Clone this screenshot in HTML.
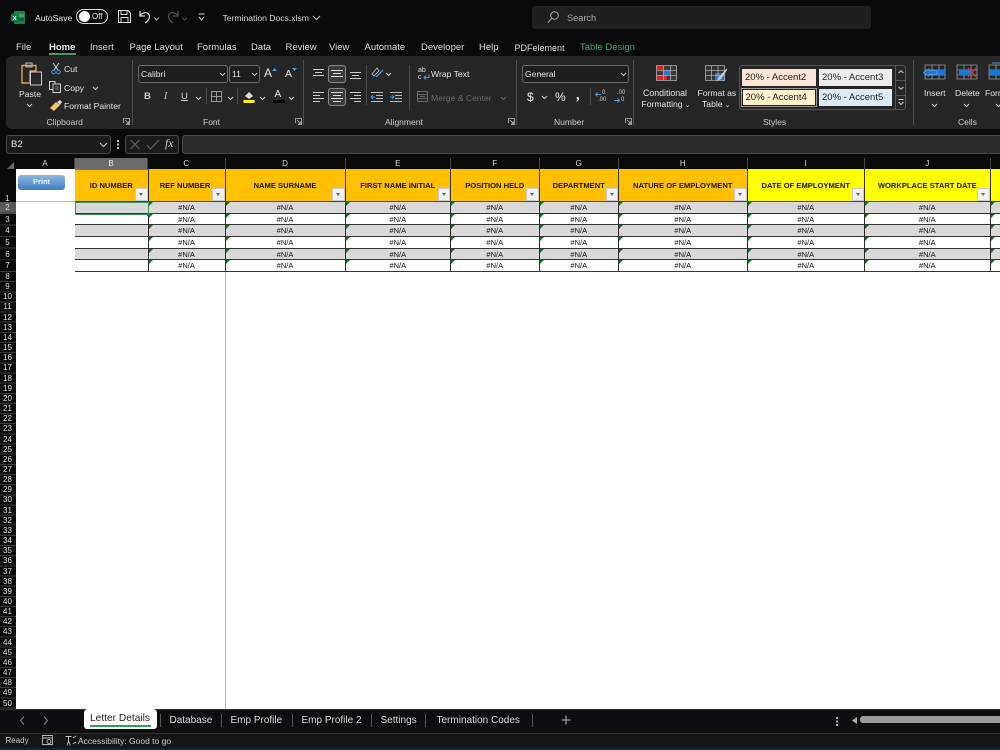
<!DOCTYPE html>
<html><head><meta charset="utf-8"><style>
html,body{margin:0;padding:0;width:1000px;height:750px;overflow:hidden;background:#0a0a0c;font-family:"Liberation Sans",sans-serif}
#w{position:relative;width:1000px;height:750px;overflow:hidden;filter:blur(.35px)}
.a{position:absolute}
.t{position:absolute;white-space:nowrap;color:#e4e4e4;font-size:8.6px;line-height:12px}
.m{font-size:9.5px;color:#ddd;top:41.5px}
.s{position:absolute;width:1px;background:#4a4a4a}
.hc{position:absolute;top:158px;height:11px;font-size:8px;line-height:11px;color:#ddd;text-align:center;background:#0a0a0a;border-right:1px solid #444;box-sizing:border-box}
svg{position:absolute;overflow:visible}
.r{position:absolute;left:75px;height:11.65px;display:grid;grid-template-columns:73.5px 77px 120px 105.5px 88.5px 79.5px 128.5px 117.5px 125.5px 20px;background:#fff;color:#111;font-size:7.5px;line-height:11.5px;text-align:center}
.r.d{background:#d9d9d9}
.r div{position:relative;box-sizing:border-box;border-right:1px solid #2a2a2a;border-bottom:1px solid #333;height:11.65px}
.r div:not(:first-child)::before{content:"";position:absolute;left:0;top:0;border-top:4px solid #0d7a1c;border-right:4px solid transparent}
.h{position:absolute;top:169px;height:32.5px;box-sizing:border-box;background:#ffc000;border-right:1px solid #333;border-bottom:1px solid #444;color:#1a1400;font-weight:bold;font-size:7.6px;line-height:34px;text-align:center;white-space:nowrap}
.h.y{background:#ff0}
.h i{position:absolute;right:0;bottom:0;width:12.5px;height:12.5px;background:#f2f2f2;border:1px solid #ccc;box-sizing:border-box}
.h i::after{content:"";position:absolute;left:3px;top:4px;border-top:3px solid #666;border-left:2.5px solid transparent;border-right:2.5px solid transparent}
.st{position:absolute;height:15px;box-sizing:border-box;color:#222;font-size:9.5px;line-height:15px;padding-left:3px}
.tab{position:absolute;top:714px;color:#ddd;font-size:10px;line-height:13px;white-space:nowrap}
.sep{position:absolute;top:714px;width:1px;height:13px;background:#555}
</style></head><body><div id="w">

<!-- title bar -->
<svg style="left:11px;top:11px" width="14" height="13"><rect x="3" y="0" width="11" height="13" rx="1" fill="#1f7d48"/><rect x="0" y="2.5" width="8" height="8" rx="1" fill="#107c41"/><rect x="8" y="3" width="5" height="3" fill="#33a866"/><rect x="8" y="7" width="5" height="3" fill="#155f38"/><text x="1.7" y="9" font-size="7" font-weight="bold" fill="#fff" font-family="Liberation Sans">x</text></svg>
<div class="t" style="left:35px;top:11.5px;font-size:8.6px">AutoSave</div>
<div class="a" style="left:76px;top:9px;width:32px;height:15px;box-sizing:border-box;border:1px solid #ddd;border-radius:8px"></div>
<div class="a" style="left:79px;top:11px;width:11px;height:11px;border-radius:50%;background:#fff"></div>
<div class="t" style="left:92px;top:11px;font-size:8px">Off</div>
<svg style="left:118px;top:10px" width="13" height="13" fill="none" stroke="#ddd" stroke-width="1"><path d="M.5.5H10L12.5 3V12.5H.5Z M3 .5V4.5H9V.5 M3 12.5V7.5H10V12.5"/></svg>
<svg style="left:139px;top:10px" width="21" height="14" fill="none" stroke="#ddd" stroke-width="1.2"><path d="M1 1V6H6 M1 6C3 2 10 1 10.5 6.5C10.5 9 9 11 6 13"/><path d="M15 7.5L17.5 10L20 7.5" stroke-width=".8"/></svg>
<svg style="left:167px;top:10px" width="21" height="14" fill="none" stroke="#555" stroke-width="1.2"><path d="M11 1V6H6 M11 6C9 2 2 1 1.5 6.5C1.5 9 3 11 6 13"/><path d="M15 7.5L17.5 10L20 7.5" stroke-width=".8"/></svg>
<svg style="left:197px;top:13px" width="9" height="8" fill="none" stroke="#ccc"><path d="M1.5 1H7.5 M2 4L4.5 7L7 4"/></svg>
<div class="t" style="left:222.5px;top:12px;font-size:8.6px;color:#d8d8d8">Termination Docs.xlsm</div>
<svg style="left:312px;top:15px" width="9" height="6" fill="none" stroke="#ccc"><path d="M1 1L4.500 4.500L8 1"/></svg>
<div class="a" style="left:532px;top:6px;width:339px;height:23px;background:#1f1f1f;border-radius:3px"></div>
<svg style="left:547px;top:11px" width="12" height="13" fill="none" stroke="#aaa" stroke-width="1"><circle cx="7.5" cy="4.5" r="3.8"/><path d="M4.800 7.300L.8 11.800"/></svg>
<div class="t" style="left:567px;top:12px;font-size:9.2px;color:#aaa">Search</div>

<!-- menu -->
<div class="t m" style="left:16px">File</div>
<div class="t m" style="left:49px;font-weight:bold;color:#eee">Home</div>
<div class="a" style="left:49px;top:53px;width:27px;height:2px;background:#3aa06a"></div>
<div class="t m" style="left:90px">Insert</div>
<div class="t m" style="left:129.5px">Page Layout</div>
<div class="t m" style="left:197px">Formulas</div>
<div class="t m" style="left:251px">Data</div>
<div class="t m" style="left:285.5px">Review</div>
<div class="t m" style="left:329px">View</div>
<div class="t m" style="left:364.5px">Automate</div>
<div class="t m" style="left:421px">Developer</div>
<div class="t m" style="left:479px">Help</div>
<div class="t m" style="left:514.5px;font-size:9px">PDFelement</div>
<div class="t m" style="left:580px;color:#3ea86e">Table Design</div>

<!-- ribbon -->
<div class="a" style="left:6px;top:56px;width:1000px;height:73px;background:#262626;border-radius:6px 0 0 6px"></div>
<div class="s" style="left:132px;top:60px;height:65px"></div>
<div class="s" style="left:303px;top:60px;height:65px"></div>
<div class="s" style="left:516px;top:60px;height:65px"></div>
<div class="s" style="left:633px;top:60px;height:65px"></div>
<div class="s" style="left:913px;top:60px;height:65px"></div>

<!-- clipboard -->
<svg style="left:21px;top:62px" width="22" height="24" fill="none"><path d="M1 3.500H15V9H9V21H1Z" stroke="#e0a040" stroke-width="1.400"/><rect x="5" y="1" width="6" height="4" stroke="#bbb"/><rect x="9.500" y="10" width="11" height="13" stroke="#ccc"/></svg>
<div class="t" style="left:19px;top:88px">Paste</div>
<svg style="left:26px;top:103px" width="7" height="5" fill="none" stroke="#ccc"><path d="M1 1L3.500 3.500L6 1"/></svg>
<svg style="left:51px;top:62px" width="10" height="13" fill="none"><path d="M2 1L7 8 M8 1L3 8" stroke="#ccc"/><circle cx="2.500" cy="10" r="1.800" stroke="#4a8fd8"/><circle cx="7.500" cy="10" r="1.800" stroke="#4a8fd8"/></svg>
<div class="t" style="left:64px;top:63px">Cut</div>
<svg style="left:49px;top:81px" width="12" height="12" fill="none" stroke="#ccc"><path d="M.5.5H6V8.500H.5Z"/><path d="M4 3H11.500V11.500H4Z" fill="#262626"/><path d="M6 6H10 M6 8H10" stroke-width=".6"/></svg>
<div class="t" style="left:64px;top:82px">Copy</div>
<svg style="left:92px;top:86px" width="7" height="5" fill="none" stroke="#ccc"><path d="M1 1L3.500 3.500L6 1"/></svg>
<svg style="left:49px;top:100px" width="13" height="12"><path d="M1 8L7 2L11 5L5 11Z" fill="#f0c870"/><path d="M8 2L11 0L13 2L11 5Z" fill="#ddd"/></svg>
<div class="t" style="left:64px;top:100px">Format Painter</div>
<div class="t" style="left:46.5px;top:116px;font-size:8.5px;color:#ccc">Clipboard</div>
<svg style="left:123px;top:118px" width="7" height="7" fill="none" stroke="#bbb" stroke-width=".8"><path d="M.5 5V.5H6.500V6.500H3 M2 2L5.500 5.500 M5.500 3.500V5.500H3.500"/></svg>

<!-- font -->
<div class="a" style="left:138px;top:65px;width:90px;height:18px;box-sizing:border-box;border:1px solid #6a6a6a;border-radius:3px;background:#1e1e1e"></div>
<div class="t" style="left:141px;top:68px">Calibri</div>
<svg style="left:219px;top:72px" width="7" height="5" fill="none" stroke="#ccc"><path d="M1 1L3.500 3.500L6 1"/></svg>
<div class="a" style="left:229px;top:65px;width:31px;height:18px;box-sizing:border-box;border:1px solid #6a6a6a;border-radius:3px;background:#1e1e1e"></div>
<div class="t" style="left:232px;top:68px">11</div>
<svg style="left:251px;top:72px" width="7" height="5" fill="none" stroke="#ccc"><path d="M1 1L3.500 3.500L6 1"/></svg>
<div class="t" style="left:264px;top:66px;font-size:12px;line-height:15px">A</div>
<svg style="left:272px;top:68px" width="5" height="3"><path d="M0 3L2.500 0L5 3Z" fill="#4a9ad8"/></svg>
<div class="t" style="left:285px;top:67px;font-size:10.5px;line-height:14px">A</div>
<svg style="left:292px;top:68px" width="5" height="3"><path d="M0 0L2.500 3L5 0Z" fill="#4a9ad8"/></svg>
<div class="t" style="left:144px;top:91px;font-weight:bold;font-size:9.5px;color:#ccc">B</div>
<div class="t" style="left:164px;top:91px;font-style:italic;font-family:'Liberation Serif',serif;font-size:10px;color:#ccc">I</div>
<div class="t" style="left:181px;top:91px;font-size:9.5px;text-decoration:underline;color:#ccc">U</div>
<svg style="left:195px;top:96px" width="7" height="5" fill="none" stroke="#ccc"><path d="M1 1L3.500 3.500L6 1"/></svg>
<div class="s" style="left:206px;top:88px;height:16px"></div>
<svg style="left:211px;top:91px" width="11" height="11" fill="none" stroke="#999"><path d="M.5.5H10.500V10.500H.5Z M5.500.5V10.500 M.5 5.500H10.500"/></svg>
<svg style="left:227px;top:96px" width="7" height="5" fill="none" stroke="#ccc"><path d="M1 1L3.500 3.500L6 1"/></svg>
<div class="s" style="left:237px;top:88px;height:16px"></div>
<svg style="left:243px;top:90px" width="12" height="13"><path d="M2 6L6 2L10 6L6 9Z" fill="#ddd"/><rect x="0.500" y="10" width="11" height="3" fill="#ff0"/></svg>
<svg style="left:259px;top:96px" width="7" height="5" fill="none" stroke="#ccc"><path d="M1 1L3.500 3.500L6 1"/></svg>
<div class="t" style="left:274.500px;top:89px;font-size:10px;line-height:12px">A</div>
<div class="a" style="left:272.500px;top:100px;width:12px;height:3px;background:#000"></div>
<svg style="left:288px;top:96px" width="7" height="5" fill="none" stroke="#ccc"><path d="M1 1L3.500 3.500L6 1"/></svg>
<div class="t" style="left:203px;top:116px;font-size:8.5px;color:#ccc">Font</div>
<svg style="left:295px;top:118px" width="7" height="7" fill="none" stroke="#bbb" stroke-width=".8"><path d="M.5 5V.5H6.500V6.500H3 M2 2L5.500 5.500 M5.500 3.500V5.500H3.500"/></svg>

<!-- alignment -->
<svg style="left:313px;top:69px" width="11" height="8" fill="none" stroke="#ccc"><path d="M0 .5H11 M2 3.500H9 M0 6.500H11"/></svg>
<div class="a" style="left:328px;top:65px;width:18px;height:18px;box-sizing:border-box;border:1px solid #888;border-radius:3px;background:#3a3a3a"></div>
<svg style="left:331px;top:70px" width="12" height="8" fill="none" stroke="#ddd"><path d="M0 .5H12 M2 3.500H10 M0 6.500H12"/></svg>
<svg style="left:350px;top:72px" width="11" height="8" fill="none" stroke="#ccc"><path d="M0 .5H11 M2 3.500H9 M0 6.500H11"/></svg>
<div class="s" style="left:366px;top:65px;height:40px"></div>
<svg style="left:371px;top:67px" width="13" height="12" fill="none"><path d="M1 7L6 1L8 4L3 9Z" stroke="#bbb" stroke-width=".9"/><path d="M5 10L12 3" stroke="#3a9ad8" stroke-width="1.300"/></svg>
<svg style="left:385px;top:72px" width="7" height="5" fill="none" stroke="#ccc"><path d="M1 1L3.500 3.500L6 1"/></svg>
<svg style="left:313px;top:92px" width="11" height="10" fill="none" stroke="#ccc"><path d="M0 .5H11 M0 3.500H7 M0 6.500H11 M0 9.500H7"/></svg>
<div class="a" style="left:328px;top:88px;width:18px;height:18px;box-sizing:border-box;border:1px solid #888;border-radius:3px;background:#3a3a3a"></div>
<svg style="left:331px;top:92px" width="12" height="10" fill="none" stroke="#ddd"><path d="M0 .5H12 M2 3.500H10 M0 6.500H12 M2 9.500H10"/></svg>
<svg style="left:350px;top:92px" width="11" height="10" fill="none" stroke="#ccc"><path d="M0 .5H11 M4 3.500H11 M0 6.500H11 M4 9.500H11"/></svg>
<svg style="left:371px;top:92px" width="12" height="10" fill="none"><path d="M0 .5H12 M5 3.500H12 M5 6.500H12 M0 9.500H12" stroke="#bbb"/><path d="M4 5H0 M2 3L0 5L2 7" stroke="#3a9ad8"/></svg>
<svg style="left:390px;top:92px" width="12" height="10" fill="none"><path d="M0 .5H12 M5 3.500H12 M5 6.500H12 M0 9.500H12" stroke="#bbb"/><path d="M0 5H4 M2 3L4 5L2 7" stroke="#3a9ad8"/></svg>
<div class="s" style="left:409px;top:65px;height:45px"></div>
<div class="t" style="left:418px;top:67px;font-size:7px;line-height:7px;color:#ddd">ab<br>c</div>
<svg style="left:423px;top:74px" width="7" height="6" fill="none" stroke="#4a9ad8"><path d="M6 .5V3.500H1 M3 1.500L1 3.500L3 5.500"/></svg>
<div class="t" style="left:431px;top:68px">Wrap Text</div>
<svg style="left:417px;top:91px" width="11" height="11" fill="none" stroke="#666"><path d="M.5.5H10.500V10.500H.5Z M.5 3.500H10.500 M.5 7.500H10.500 M3 5.500H8"/></svg>
<div class="t" style="left:431px;top:92px;color:#6a6a6a">Merge &amp; Center</div>
<svg style="left:500px;top:96px" width="7" height="5" fill="none" stroke="#666"><path d="M1 1L3.500 3.500L6 1"/></svg>
<div class="t" style="left:385px;top:116px;font-size:8.5px;color:#ccc">Alignment</div>
<svg style="left:508px;top:118px" width="7" height="7" fill="none" stroke="#bbb" stroke-width=".8"><path d="M.5 5V.5H6.500V6.500H3 M2 2L5.500 5.500 M5.500 3.500V5.500H3.500"/></svg>

<!-- number -->
<div class="a" style="left:522px;top:65px;width:107px;height:18px;box-sizing:border-box;border:1px solid #6a6a6a;border-radius:3px;background:#1e1e1e"></div>
<div class="t" style="left:525px;top:68px">General</div>
<svg style="left:620px;top:72px" width="7" height="5" fill="none" stroke="#ccc"><path d="M1 1L3.500 3.500L6 1"/></svg>
<div class="t" style="left:527px;top:90px;font-size:12px;line-height:14px">$</div>
<svg style="left:541px;top:95px" width="7" height="5" fill="none" stroke="#ccc"><path d="M1 1L3.500 3.500L6 1"/></svg>
<div class="t" style="left:555px;top:90px;font-size:12px;line-height:14px">%</div>
<div class="t" style="left:576px;top:87px;font-size:15px;line-height:16px;font-weight:bold;font-family:'Liberation Serif',serif">,</div>
<div class="s" style="left:590px;top:88px;height:17px"></div>
<svg style="left:595px;top:92px" width="6" height="5" fill="none" stroke="#4a9ad8"><path d="M6 2.500H.5 M2.500 .5L.5 2.500L2.500 4.500"/></svg>
<div class="t" style="left:602px;top:90px;font-size:6px;line-height:6.5px;color:#ccc">0</div>
<div class="t" style="left:598px;top:97px;font-size:6px;line-height:6.5px;color:#ccc">.00</div>
<div class="t" style="left:617px;top:90px;font-size:6px;line-height:6.5px;color:#ccc">.00</div>
<svg style="left:614px;top:98px" width="6" height="5" fill="none" stroke="#4a9ad8"><path d="M0 2.500H5.500 M3.500 .5L5.500 2.500L3.500 4.500"/></svg>
<div class="t" style="left:621px;top:97px;font-size:6px;line-height:6.5px;color:#ccc">0</div>
<div class="t" style="left:554px;top:116px;font-size:8.5px;color:#ccc">Number</div>
<svg style="left:625px;top:118px" width="7" height="7" fill="none" stroke="#bbb" stroke-width=".8"><path d="M.5 5V.5H6.500V6.500H3 M2 2L5.500 5.500 M5.500 3.500V5.500H3.500"/></svg>

<!-- cond format -->
<svg style="left:656px;top:65px" width="21" height="16"><rect width="21" height="16" fill="#3a3a3a"/><rect x="0" y="0" width="7" height="5" fill="#e02020"/><rect x="7" y="5" width="7" height="5" fill="#1a78d8"/><rect x="0" y="10" width="11" height="5" fill="#e02020"/><path d="M.5.5H20.500V15.500H.5Z M.5 5.500H20.500 M.5 10.500H20.500 M7.500.5V15.500 M14.500.5V15.500" fill="none" stroke="#aaa" stroke-width=".8"/></svg>
<div class="t" style="left:643px;top:87px;font-size:8.8px">Conditional</div>
<div class="t" style="left:641.500px;top:98px">Formatting<span style="font-size:7px"> ⌄</span></div>
<svg style="left:705px;top:65px" width="23" height="19"><rect x="0" y="0" width="20" height="16" fill="#333"/><rect x="10" y="8" width="10" height="8" fill="#1a78d8"/><path d="M.5.5H19.500V15.500H.5Z M.5 5.500H19.500 M.5 10.500H19.500 M6.500.5V15.500 M13 .5V15.500" fill="none" stroke="#aaa" stroke-width=".8"/><path d="M22 3L14 12L12 16L16 14L22 5" fill="#ccc"/></svg>
<div class="t" style="left:697.500px;top:87px">Format as</div>
<div class="t" style="left:702px;top:98px">Table<span style="font-size:7px"> ⌄</span></div>

<!-- styles -->
<div class="a" style="left:739px;top:65px;width:167px;height:45px;box-sizing:border-box;border:1px solid #555;border-radius:3px"></div>
<div class="st" style="left:742px;top:69px;width:74px;height:17px;background:#fce4d6;line-height:17px">20% - Accent2</div>
<div class="st" style="left:819px;top:69px;width:73px;height:17px;background:#ededed;line-height:17px">20% - Accent3</div>
<div class="st" style="left:741px;top:88px;width:76px;height:19px;background:#fff2cc;border:1px solid #999;outline:1px solid #222;outline-offset:-2px;line-height:18px;padding-left:3.5px">20% - Accent4</div>
<div class="st" style="left:819px;top:89px;width:73px;height:17px;background:#ddebf7;line-height:17px">20% - Accent5</div>
<div class="a" style="left:895px;top:65px;width:1px;height:45px;background:#555"></div>
<div class="a" style="left:895px;top:80px;width:11px;height:1px;background:#555"></div>
<div class="a" style="left:895px;top:95px;width:11px;height:1px;background:#555"></div>
<svg style="left:898px;top:70px" width="6" height="4" fill="none" stroke="#ccc"><path d="M.5 3L3 .8L5.500 3"/></svg>
<svg style="left:898px;top:86px" width="6" height="4" fill="none" stroke="#ccc"><path d="M.5 1L3 3.200L5.500 1"/></svg>
<svg style="left:898px;top:99px" width="6" height="7" fill="none" stroke="#ccc"><path d="M.5 .5H5.500 M.5 3L3 5.500L5.500 3"/></svg>
<div class="t" style="left:763px;top:116px;font-size:8.5px;color:#ccc">Styles</div>

<!-- cells -->
<svg style="left:923px;top:64px" width="24" height="17"><path d="M2 1H22V15H2Z M2 6H22 M2 11H22 M9 1V15 M16 1V15" fill="none" stroke="#999" stroke-width=".8"/><rect x="9" y="6" width="13" height="5" fill="#1a78d8"/><path d="M0 8.500L6 4.500V6.500H14V10.500H6V12.500Z" fill="#1a78d8" stroke="#7ab8f0" stroke-width=".5"/></svg>
<svg style="left:956px;top:64px" width="22" height="17"><path d="M1 1H21V15H1Z M1 6H21 M1 11H21 M8 1V15 M15 1V15" fill="none" stroke="#999" stroke-width=".8"/><rect x="3" y="6" width="12" height="5" fill="#1a78d8"/><path d="M12 4L20 13 M20 4L12 13" stroke="#d83a3a" stroke-width="1.200"/></svg>
<svg style="left:988px;top:62px" width="22" height="19"><path d="M1 3H21V17H1Z M1 8H21 M1 13H21 M8 3V17" fill="none" stroke="#999" stroke-width=".8"/><rect x="1" y="8" width="20" height="5" fill="#1a78d8"/><path d="M4 1H20" stroke="#4a9ad8"/></svg>
<div class="t" style="left:924px;top:87px">Insert</div>
<div class="t" style="left:955px;top:87px">Delete</div>
<div class="t" style="left:985px;top:87px">Format</div>
<svg style="left:931px;top:103px" width="7" height="5" fill="none" stroke="#ccc"><path d="M1 1L3.500 3.500L6 1"/></svg>
<svg style="left:963px;top:103px" width="7" height="5" fill="none" stroke="#ccc"><path d="M1 1L3.500 3.500L6 1"/></svg>
<svg style="left:995px;top:103px" width="7" height="5" fill="none" stroke="#ccc"><path d="M1 1L3.500 3.500L6 1"/></svg>
<div class="t" style="left:958px;top:116px;font-size:8.5px;color:#ccc">Cells</div>

<!-- formula bar -->
<div class="a" style="left:0;top:129px;width:1000px;height:29px;background:#0a0a0c"></div>
<div class="a" style="left:6px;top:135px;width:105px;height:19px;box-sizing:border-box;border:1px solid #4a4a4a;border-radius:3px;background:#1c1c1c"></div>
<div class="t" style="left:11px;top:139px;font-size:9.5px">B2</div>
<svg style="left:99px;top:142px" width="9" height="6" fill="none" stroke="#ccc"><path d="M1 1L4.500 4.500L8 1"/></svg>
<div class="a" style="left:117px;top:140px;width:2px;height:2px;background:#bbb;box-shadow:0 3.5px 0 #bbb,0 7px 0 #bbb"></div>
<div class="a" style="left:125px;top:135px;width:54px;height:19px;box-sizing:border-box;border:1px solid #4a4a4a;border-radius:3px;background:#1c1c1c"></div>
<svg style="left:130px;top:139px" width="30" height="11" fill="none" stroke="#606060" stroke-width="1.100"><path d="M.5 1L9.500 10 M9.500 1L.5 10 M17 6L20.500 10L29 1"/></svg>
<div class="t" style="left:165px;top:138px;font-family:'Liberation Serif',serif;font-style:italic;font-size:11.5px;color:#ccc">fx</div>
<div class="a" style="left:182px;top:135px;width:830px;height:19px;box-sizing:border-box;border:1px solid #4a4a4a;border-radius:3px;background:#2a2a2a"></div>

<!-- sheet -->
<div class="a" style="left:0;top:158px;width:1000px;height:551px;background:#fff"></div>
<div class="a" style="left:0;top:158px;width:16px;height:551px;background:#0a0a0a"></div>
<svg style="left:7px;top:162px" width="7" height="7"><path d="M7 0V7H0Z" fill="#666"/></svg>
<div class="hc" style="left:16px;width:59px">A</div>
<div class="hc" style="left:75px;width:73px;background:#6a6a6a;color:#eee">B</div>
<div class="hc" style="left:148px;width:77.5px">C</div>
<div class="hc" style="left:225.5px;width:120px">D</div>
<div class="hc" style="left:345.5px;width:105.5px">E</div>
<div class="hc" style="left:451px;width:88.5px">F</div>
<div class="hc" style="left:539.5px;width:79.5px">G</div>
<div class="hc" style="left:619px;width:128.5px">H</div>
<div class="hc" style="left:747.5px;width:117.5px">I</div>
<div class="hc" style="left:865px;width:125.5px">J</div>
<div class="hc" style="left:990.5px;width:20px"></div>

<div class="a" style="left:0;top:192.5px;width:15px;font-size:8px;line-height:11px;color:#ddd;text-align:center">1</div>
<div class="a" style="left:0;top:202px;width:16px;height:11.6px;background:#5a5a5a"></div>
<div class="a" style="left:0;top:202px;width:16px;height:70px;background:repeating-linear-gradient(to bottom,transparent 0,transparent 10.65px,#3a3a3a 10.65px,#3a3a3a 11.65px)"></div>
<div class="a" style="left:0;top:202px;width:15px;font-size:8px;line-height:11.65px;color:#ddd;text-align:center">2<br>3<br>4<br>5<br>6<br>7</div>
<div class="a" style="left:0;top:272px;width:16px;height:437px;background:repeating-linear-gradient(to bottom,transparent 0,transparent 9.15px,#3a3a3a 9.15px,#3a3a3a 10.15px)"></div>
<div class="a" style="left:0;top:272px;width:15px;font-size:8px;line-height:10.15px;color:#ddd;text-align:center">8<br>9<br>10<br>11<br>12<br>13<br>14<br>15<br>16<br>17<br>18<br>19<br>20<br>21<br>22<br>23<br>24<br>25<br>26<br>27<br>28<br>29<br>30<br>31<br>32<br>33<br>34<br>35<br>36<br>37<br>38<br>39<br>40<br>41<br>42<br>43<br>44<br>45<br>46<br>47<br>48<br>49<br>50</div>

<!-- headers row -->
<div class="a" style="left:18px;top:175px;width:47px;height:15px;border-radius:3px;background:linear-gradient(#8fb8e0,#3f7fbf);color:#e8f2fb;font-weight:bold;font-size:7.5px;line-height:14px;text-align:center">Print</div>
<div class="a" style="left:16px;top:201px;width:59px;height:1px;background:#bbb"></div>
<div class="h" style="left:75px;width:73.5px">ID NUMBER<i></i></div>
<div class="h" style="left:148.5px;width:77px;padding-right:3px">REF NUMBER<i></i></div>
<div class="h" style="left:225.5px;width:120px">NAME SURNAME<i></i></div>
<div class="h" style="left:345.5px;width:105.5px">FIRST NAME INITIAL<i></i></div>
<div class="h" style="left:451px;width:88.5px">POSITION HELD<i></i></div>
<div class="h" style="left:539.5px;width:79.5px">DEPARTMENT<i></i></div>
<div class="h" style="left:619px;width:128.5px">NATURE OF EMPLOYMENT<i></i></div>
<div class="h y" style="left:747.5px;width:117.5px">DATE OF EMPLOYMENT<i></i></div>
<div class="h y" style="left:865px;width:125.5px">WORKPLACE START DATE<i></i></div>
<div class="h y" style="left:990.5px;width:20px"></div>

<!-- data rows -->
<div class="r d" style="top:202px"><div></div><div>#N/A</div><div>#N/A</div><div>#N/A</div><div>#N/A</div><div>#N/A</div><div>#N/A</div><div>#N/A</div><div>#N/A</div><div></div></div>
<div class="r" style="top:213.65px"><div></div><div>#N/A</div><div>#N/A</div><div>#N/A</div><div>#N/A</div><div>#N/A</div><div>#N/A</div><div>#N/A</div><div>#N/A</div><div></div></div>
<div class="r d" style="top:225.3px"><div></div><div>#N/A</div><div>#N/A</div><div>#N/A</div><div>#N/A</div><div>#N/A</div><div>#N/A</div><div>#N/A</div><div>#N/A</div><div></div></div>
<div class="r" style="top:236.95px"><div></div><div>#N/A</div><div>#N/A</div><div>#N/A</div><div>#N/A</div><div>#N/A</div><div>#N/A</div><div>#N/A</div><div>#N/A</div><div></div></div>
<div class="r d" style="top:248.6px"><div></div><div>#N/A</div><div>#N/A</div><div>#N/A</div><div>#N/A</div><div>#N/A</div><div>#N/A</div><div>#N/A</div><div>#N/A</div><div></div></div>
<div class="r" style="top:260.25px"><div></div><div>#N/A</div><div>#N/A</div><div>#N/A</div><div>#N/A</div><div>#N/A</div><div>#N/A</div><div>#N/A</div><div>#N/A</div><div></div></div>
<div class="a" style="left:75px;top:201.5px;width:74px;height:13px;box-sizing:border-box;border:1.5px solid #3f8f5f"></div>
<div class="a" style="left:147px;top:212.5px;width:3px;height:3px;background:#1f7a4a"></div>
<div class="a" style="left:75px;top:169px;width:73px;height:1px;background:#3f8f5f"></div>
<div class="a" style="left:225px;top:272px;width:1px;height:437px;background:#b8b8b8"></div>

<!-- tabs -->
<div class="a" style="left:0;top:709px;width:1000px;height:24px;background:#0d0d12"></div>
<div class="a" style="left:0;top:708.5px;width:1000px;height:1px;background:#333"></div>
<svg style="left:20px;top:716px" width="32" height="9" fill="none" stroke="#888" stroke-width="1"><path d="M4 .5L.5 4.500L4 8.500 M24 .5L27.500 4.500L24 8.500"/></svg>
<div class="a" style="left:84px;top:709px;width:73px;height:20px;background:#fff;border-radius:4px 4px 3px 3px"></div>
<div class="t" style="left:90px;top:711.5px;font-size:10.2px;line-height:14px;color:#222">Letter Details</div>
<div class="a" style="left:90px;top:725px;width:61px;height:2px;background:#2f9a62"></div>
<div class="tab" style="left:169.5px">Database</div>
<div class="sep" style="left:160px"></div>
<div class="sep" style="left:220.5px"></div>
<div class="tab" style="left:230.5px">Emp Profile</div>
<div class="sep" style="left:291.5px"></div>
<div class="tab" style="left:301.5px">Emp Profile 2</div>
<div class="sep" style="left:371px"></div>
<div class="tab" style="left:380.5px">Settings</div>
<div class="sep" style="left:425px"></div>
<div class="tab" style="left:436.5px">Termination Codes</div>
<div class="sep" style="left:531.5px"></div>
<svg style="left:561px;top:715px" width="10" height="10" stroke="#bbb"><path d="M5 .5V9.500 M.5 5H9.500"/></svg>
<div class="a" style="left:836px;top:717px;width:2px;height:2px;background:#aaa;box-shadow:0 3.5px 0 #aaa,0 7px 0 #aaa"></div>
<svg style="left:852px;top:717px" width="5" height="7"><path d="M5 0V7L0 3.500Z" fill="#aaa"/></svg>
<div class="a" style="left:860px;top:716px;width:150px;height:7px;background:#9a9a9a;border-radius:3px"></div>

<!-- status -->
<div class="a" style="left:0;top:733px;width:1000px;height:15px;background:#151516;border-top:1px solid #333;box-sizing:border-box"></div>
<div class="a" style="left:0;top:748px;width:1000px;height:2px;background:#152230"></div>
<div class="t" style="left:5.5px;top:735px;font-size:8px;color:#ccc">Ready</div>
<svg style="left:42px;top:735px" width="11" height="10" fill="none" stroke="#bbb" stroke-width=".9"><path d="M.5.5H10.500V9.500H.5Z M.5 3H10.500"/><circle cx="7" cy="6.500" r="2"/></svg>
<svg style="left:65px;top:735px" width="12" height="11" fill="none" stroke="#ccc" stroke-width=".9"><path d="M.5 1.500H6.500 M3.500 1.500V6L2 10.500 M3.500 6L5.500 10.500 M8 3L11 1 M8 9L11 7"/></svg>
<div class="t" style="left:78px;top:735px;font-size:8.5px;color:#ccc">Accessibility: Good to go</div>
</div></body></html>
